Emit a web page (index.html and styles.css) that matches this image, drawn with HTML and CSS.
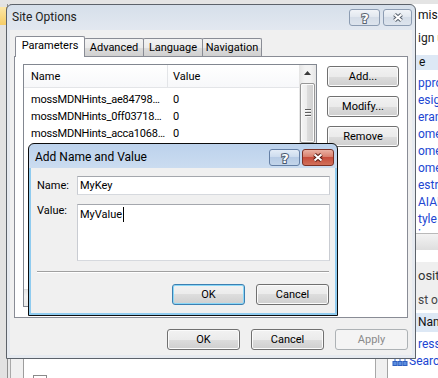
FILE: index.html
```html
<!DOCTYPE html>
<html>
<head>
<meta charset="utf-8">
<title>Site Options</title>
<link rel="stylesheet" href="styles.css">
</head>
<body>
<div class="desk">
  <div class="bg-top"></div>
  <div class="bg-cols">
    <div class="bg-left"><div class="bg-yellow"></div></div>
    <div class="bg-nav"></div>
    <div class="bg-main"><div class="bg-icon"></div></div>
    <div class="bg-split"></div>
    <div class="bg-right">
      <div class="rp-title">mis</div>
      <div class="rp-sub">ign u</div>
      <div class="rp-head">e</div>
      <div class="rp-list">
        <div class="rp-row">ppro</div>
        <div class="rp-row">esign</div>
        <div class="rp-row">eran</div>
        <div class="rp-row">ome</div>
        <div class="rp-row">ome</div>
        <div class="rp-row">ome</div>
        <div class="rp-row">estri</div>
        <div class="rp-row">AIAB</div>
        <div class="rp-row">tyle l</div>
        <div class="rp-row rp-cut">:</div>
      </div>
      <div class="rp-bar"></div>
      <div class="rp-sect">
        <div class="rp-h">osite</div>
        <div class="rp-d">st of</div>
      </div>
      <div class="rp-head2">Name</div>
      <div class="rp-row rp-row2">ress</div>
      <div class="rp-row rp-search">
        <svg class="org" width="16" height="9" viewBox="0 0 16 9"><path d="M3 1.5H13M3 1.5V4M8 1.5V4M13 1.5V4" stroke="#3d6fcf" stroke-width="1" fill="none"/><rect x="1" y="4.5" width="4" height="4" fill="#5b8ee0" stroke="#2f5fbf" stroke-width="1"/><rect x="6" y="4.5" width="4" height="4" fill="#5b8ee0" stroke="#2f5fbf" stroke-width="1"/><rect x="11" y="4.5" width="4" height="4" fill="#5b8ee0" stroke="#2f5fbf" stroke-width="1"/></svg>
        <span>Search</span>
      </div>
    </div>
  </div>
</div>

<div class="dlg dlg-outer">
  <div class="cap">
    <div class="cap-title">Site Options</div>
    <div class="cap-btns">
      <div class="cbtn cb-help">
        <svg width="12" height="14" viewBox="0 0 12 14"><text x="6" y="12" text-anchor="middle" font-family="DejaVu Sans" font-weight="bold" font-size="13" fill="#fff" stroke="#5b6470" stroke-width="2" paint-order="stroke">?</text></svg>
      </div>
      <div class="cbtn cb-close">
        <svg width="14" height="11" viewBox="0 0 14 11"><path d="M3.5 2.5L10.5 8.5M10.5 2.5L3.5 8.5" stroke="#5b6470" stroke-width="4.2"/><path d="M3.5 2.5L10.5 8.5M10.5 2.5L3.5 8.5" stroke="#fff" stroke-width="2"/></svg>
      </div>
    </div>
  </div>
  <div class="client">
    <div class="tabs">
      <div class="tab tab-sel t-params">Parameters</div>
      <div class="tab t-adv">Advanced</div>
      <div class="tab t-lang">Language</div>
      <div class="tab t-nav">Navigation</div>
    </div>
    <div class="page">
      <div class="lv">
        <div class="lv-main">
          <div class="lv-head">
            <div class="lv-c1">Name</div>
            <div class="lv-c2">Value</div>
          </div>
          <div class="lv-rows">
            <div class="lv-row"><div class="lv-c1 nm">mossMDNHints_ae84798…</div><div class="lv-c2">0</div></div>
            <div class="lv-row"><div class="lv-c1 nm">mossMDNHints_0ff03718…</div><div class="lv-c2">0</div></div>
            <div class="lv-row"><div class="lv-c1 nm">mossMDNHints_acca1068…</div><div class="lv-c2">0</div></div>
          </div>
          <div class="hs"></div>
        </div>
        <div class="vs">
          <div class="vs-btn"><svg width="7" height="4" viewBox="0 0 7 4"><path d="M0 4L3.5 0L7 4Z" fill="#3a3a3a"/></svg></div>
          <div class="vs-track">
            <div class="vs-thumb"><div class="grip"></div><div class="grip"></div><div class="grip"></div></div>
          </div>
          <div class="vs-btn"></div>
          <div class="vs-corner"></div>
        </div>
      </div>
      <div class="side">
        <div class="btn">Add...</div>
        <div class="btn">Modify...</div>
        <div class="btn">Remove</div>
      </div>
    </div>
    <div class="foot">
      <div class="btn fbtn">OK</div>
      <div class="btn fbtn">Cancel</div>
      <div class="btn fbtn btn-dis">Apply</div>
    </div>
  </div>
</div>

<div class="dlg dlg-inner">
  <div class="cap cap-act">
    <div class="cap-title">Add Name and Value</div>
    <div class="cap-btns">
      <div class="cbtn cb-help-act">
        <svg width="12" height="14" viewBox="0 0 12 14"><text x="6" y="12" text-anchor="middle" font-family="DejaVu Sans" font-weight="bold" font-size="13" fill="#fff" stroke="#4a5a70" stroke-width="2" paint-order="stroke">?</text></svg>
      </div>
      <div class="cbtn cb-close-act">
        <svg width="14" height="11" viewBox="0 0 14 11"><path d="M3.5 2.5L10.5 8.5M10.5 2.5L3.5 8.5" stroke="#5a1d15" stroke-width="4.2"/><path d="M3.5 2.5L10.5 8.5M10.5 2.5L3.5 8.5" stroke="#fff" stroke-width="2"/></svg>
      </div>
    </div>
  </div>
  <div class="client client-in">
    <div class="field">
      <div class="lbl">Name:</div>
      <div class="inp">MyKey</div>
    </div>
    <div class="field field-val">
      <div class="lbl lbl-top">Value:</div>
      <div class="inp area">MyValue<span class="caret"></span></div>
    </div>
    <div class="sep"></div>
    <div class="foot foot-in">
      <div class="btn fbtn btn-def">OK</div>
      <div class="btn fbtn">Cancel</div>
    </div>
  </div>
</div>
</body>
</html>
```

FILE: styles.css
```css
* { box-sizing: border-box; }
html, body { margin: 0; padding: 0; }
body {
  width: 438px;
  height: 378px;
  overflow: hidden;
  position: relative;
  background: #fff;
  font-family: Roboto, "Liberation Sans", sans-serif;
  font-size: 11px;
  color: #000;
}

/* ---------- background application ---------- */
.desk { display: flex; flex-direction: column; height: 378px; }
.bg-top { height: 4px; flex: none; background: #e4e4e4; }
.bg-cols { flex: 1; display: flex; min-height: 0; }
.bg-left { width: 7px; flex: none; background: #e2e2e2; padding-top: 3px; }
.bg-yellow { height: 18px; background: linear-gradient(#fce7a8, #f6cd66); border-right: 1px solid #e0b456; }
.bg-nav {
  width: 17px; flex: none;
  border-left: 1px solid #8f8f8f;
  border-right: 1px solid #9d9d9d;
  background: linear-gradient(to right, #e9e9e9 0 2px, #a9a9a9 2px 3px, #f0f0f0 3px);
}
.bg-main {
  flex: 1; background: #fff;
  display: flex; flex-direction: column; justify-content: flex-end;
  padding-left: 9px;
}
.bg-icon { width: 14px; height: 14px; border: 1px solid #8a8a8a; background: #f4f4f4; margin-bottom: -11px; box-shadow: inset 0 0 0 2px #fff; }
.bg-split { width: 12px; flex: none; border-left: 1px solid #a8a8a8; background: #f0f0f0; }
.bg-right {
  width: 51px; flex: none;
  border-left: 1px solid #a3a3a3;
  background: #fff;
  font-size: 12px;
  white-space: nowrap;
  overflow: hidden;
  display: flex; flex-direction: column;
}
.rp-title { height: 22px; line-height: 22px; padding-left: 30px; color: #111; }
.rp-sub { height: 24px; line-height: 24px; padding-left: 30px; color: #222; }
.rp-head { margin-top: 5px; height: 15px; line-height: 15px; padding-left: 31px; background: #dde8f5; color: #111; }
.rp-list { margin-top: 5px; }
.rp-row { height: 17px; line-height: 17px; padding-left: 30px; color: #2146d2; }
.rp-cut { height: 5px; overflow: hidden; line-height: 9px; }
.rp-bar { height: 17px; flex: none; border-top: 1px solid #b9b9b9; background: linear-gradient(#f3f3f3, #dedede); }
.rp-sect { margin-top: 12px; height: 48px; background: #efefef; padding-top: 6px; }
.rp-h { line-height: 16px; padding-left: 30px; font-size: 13px; color: #333; }
.rp-d { margin-top: 8px; line-height: 16px; padding-left: 30px; color: #444; }
.rp-head2 { margin-top: 3px; height: 19px; line-height: 19px; padding-left: 30px; background: #dde8f5; color: #111; }
.rp-row2 { margin-top: 4px; }
.rp-search { display: flex; align-items: center; gap: 1px; padding-left: 4px; }
.org { flex: none; }

/* ---------- windows ---------- */
.dlg { position: absolute; display: flex; flex-direction: column; }
.cap { display: flex; align-items: flex-start; flex: none; }
.cap-title { flex: 1; font-size: 12px; white-space: nowrap; }
.cap-btns { display: flex; }
.cbtn { height: 17px; border-radius: 3px; display: flex; align-items: center; justify-content: center; }

.dlg-outer {
  left: 6px; top: 4px; width: 410px; height: 355px;
  border: 1px solid #5c626a;
  border-radius: 6px 6px 0 0;
  padding: 0 3px 3px;
  background: linear-gradient(#d6dfea, #e2e8f0 25px, #e6eaf0 25px);
}
.dlg-outer .cap { height: 25px; }
.dlg-outer .cap-title { line-height: 25px; padding-left: 2px; color: #222; }
.dlg-outer .cap-btns { margin-top: 4px; gap: 3px; }
.cb-help, .cb-close {
  border: 1px solid #8c9cb2;
  background: linear-gradient(#f1f4f8, #e2e8ef 45%, #d5dde8 50%, #dde4ed);
}
.cb-help { width: 31px; }
.cb-close { width: 29px; }

.client { flex: 1; background: #f0f0f0; display: flex; flex-direction: column; padding: 6px 4px 0 4px; }

/* tabs */
.tabs { height: 20px; display: flex; align-items: flex-end; padding-left: 1px; flex: none; }
.tab {
  height: 18px;
  margin-left: -1px;
  border: 1px solid #898c95;
  border-bottom: none;
  border-radius: 2px 2px 0 0;
  background: linear-gradient(#f3f3f3, #ebebeb 50%, #dddddd 50%, #d0d0d0);
  text-align: center;
  line-height: 18px;
  white-space: nowrap;
}
.tab-sel {
  height: 21px;
  margin-left: 0;
  margin-bottom: -1px;
  background: #fff;
  line-height: 18px;
  position: relative;
  z-index: 1;
}
.t-params { width: 70px; }
.t-adv { width: 60px; }
.t-lang { width: 60px; }
.t-nav { width: 60px; }

.page {
  height: 262px; flex: none;
  border: 1px solid #898c95;
  background: #fff;
  display: flex; align-items: flex-start;
  padding: 7px 0 0 8px;
}

/* list view */
.lv { width: 294px; height: 243px; border: 1px solid #828790; display: flex; background: #fff; }
.lv-main { flex: 1; display: flex; flex-direction: column; min-width: 0; }
.lv-head {
  height: 23px; flex: none; display: flex;
  border-bottom: 1px solid #e3e5e8;
  background: linear-gradient(#ffffff, #f7f8fa);
  padding-top: 2px;
  line-height: 19px;
}
.lv-head .lv-c1 { border-right: 1px solid #e3e5e8; margin-top: -2px; padding-top: 2px; }
.lv-c1 { width: 144px; flex: none; padding-left: 7px; white-space: nowrap; overflow: hidden; }
.lv-c2 { padding-left: 5px; white-space: nowrap; }
.lv-rows { padding-top: 3px; }
.lv-row { display: flex; height: 17px; line-height: 17px; }
.nm { letter-spacing: -0.2px; }
.hs { margin-top: auto; height: 17px; flex: none; background: linear-gradient(#e6e6e6, #f3f3f3 40%, #eaeaea); border-top: 1px solid #dcdcdc; }
.vs { width: 17px; flex: none; display: flex; flex-direction: column; background: linear-gradient(to right, #e4e4e4, #f3f3f3 35%, #f3f3f3 65%, #e6e6e6); }
.vs-btn { height: 17px; flex: none; display: flex; align-items: center; justify-content: center; padding-bottom: 1px; }
.vs-track { flex: 1; padding-top: 1px; }
.vs-thumb {
  height: 60px; margin: 0 1px;
  border: 1px solid #979797;
  border-radius: 2px;
  background: linear-gradient(to right, #f5f5f5, #ececec 50%, #dcdcdc 50%, #cfcfcf);
  box-shadow: inset 0 0 0 1px #fbfbfb;
  display: flex; flex-direction: column; align-items: center; justify-content: center; gap: 1px;
}
.grip { width: 6px; height: 2px; border-top: 1px solid #5f5f5f; border-bottom: 1px solid #fafafa; }
.vs-corner { height: 17px; flex: none; background: #f0f0f0; }

.side { margin-left: 10px; width: 72px; display: flex; flex-direction: column; gap: 9px; padding-top: 2px; }

/* buttons */
.btn {
  height: 21px;
  border: 1px solid #707070;
  border-radius: 3px;
  background: linear-gradient(#f2f2f2, #ebebeb 50%, #dddddd 50%, #cfcfcf);
  box-shadow: inset 0 0 0 1px #fbfbfb;
  text-align: center;
  line-height: 19px;
  white-space: nowrap;
}
.foot { display: flex; justify-content: flex-end; gap: 11px; margin-top: 11px; flex: none; }
.fbtn { width: 73px; }
.btn-dis { border-color: #adb2b5; background: #f4f4f4; box-shadow: none; color: #8a8a8a; }
.btn-def { border-color: #3c7fb1; box-shadow: inset 0 0 0 1px #8ad7f7; }

/* nested dialog */
.dlg-inner {
  left: 28px; top: 143px; width: 310px; height: 173px;
  border: 1px solid #0c0c0c;
  border-radius: 6px 6px 0 0;
  padding: 0 2px 2px;
  background: linear-gradient(#bcd2ec, #cbdcf0 24px, #8fcbef 24px);
}
.cap-act { height: 24px; }
.cap-act .cap-title { line-height: 24px; padding-left: 4px; padding-top: 1px; color: #000; }
.cap-act .cap-btns { margin-top: 5px; gap: 2px; margin-right: 1px; }
.cb-help-act {
  width: 31px;
  border: 1px solid #6580a6;
  background: linear-gradient(#e3ecf7, #cddcee 45%, #b7cbe5 50%, #c3d5ea);
}
.cb-close-act {
  width: 32px;
  border: 1px solid #7b3025;
  background: linear-gradient(#eab1a3, #d9806e 45%, #c64d3c 50%, #d1705a);
}
.client-in { padding: 8px 5px 0 6px; }
.field { display: flex; align-items: flex-start; flex: none; }
.field-val { margin-top: 9px; }
.lbl { width: 40px; flex: none; line-height: 19px; }
.lbl-top { line-height: 14px; }
.inp {
  flex: 1;
  height: 19px;
  border: 1px solid;
  border-color: #a4a7ad #c9ccd2 #d6d9de #c9ccd2;
  background: #fff;
  padding: 0 2px;
  line-height: 17px;
  white-space: nowrap;
}
.area { height: 57px; padding-top: 2px; line-height: 15px; }
.caret { display: inline-block; width: 1px; height: 15px; background: #000; vertical-align: top; margin-left: 1px; }
.sep { margin: 10px 1px 0 0; height: 2px; flex: none; border-top: 1px solid #a0a0a0; border-bottom: 1px solid #fff; }
.foot-in { margin-top: 11px; margin-right: 1px; }
```
